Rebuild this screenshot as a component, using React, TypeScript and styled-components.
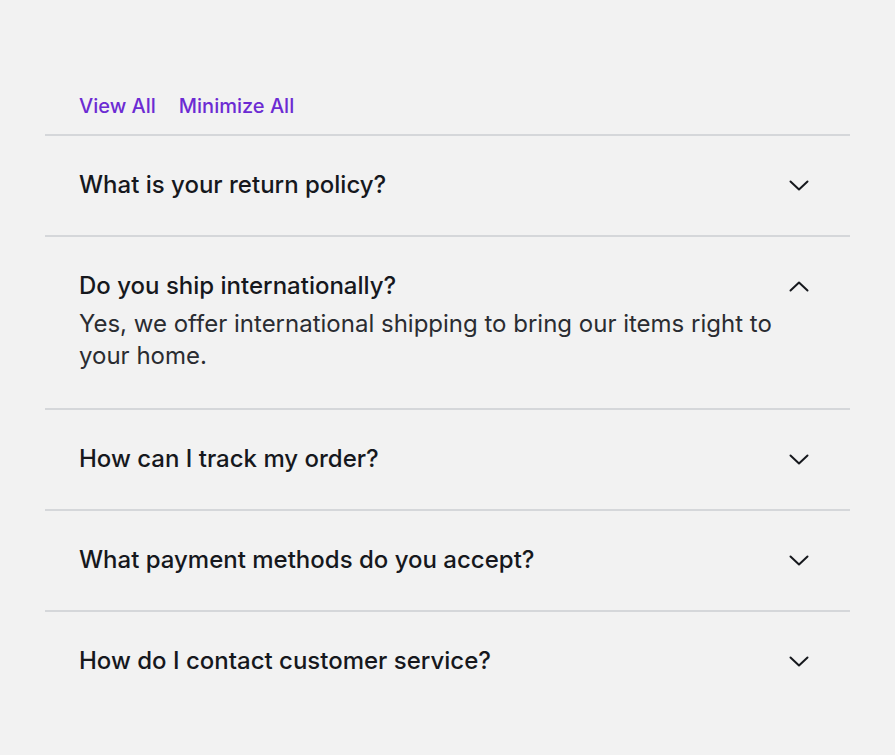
import React, { useState } from 'react';
import styled, { createGlobalStyle } from 'styled-components';

const GlobalStyle = createGlobalStyle`
  html, body {
    margin: 0;
    padding: 0;
    background: #f2f2f2;
    font-family: Inter, "Noto Sans", sans-serif;
    color: #16181d;
  }
`;

const Page = styled.div`
  padding: 94px 45px 40px 45px;
`;

const Toolbar = styled.div`
  display: flex;
  gap: 23px;
  padding: 0 34px 16px 34px;
`;

const LinkButton = styled.button`
  background: none;
  border: none;
  padding: 0;
  font-family: inherit;
  font-size: 20px;
  line-height: 24px;
  font-weight: 500;
  color: #6c2bd3;
  cursor: pointer;
`;

const Item = styled.div`
  border-top: 2px solid #d5d7da;
  padding: 35px 41px 36px 34px;
`;

const Question = styled.button`
  width: 100%;
  display: flex;
  align-items: center;
  justify-content: space-between;
  background: none;
  border: none;
  padding: 0;
  font-family: inherit;
  font-size: 24px;
  line-height: 28px;
  font-weight: 500;
  color: #16181d;
  text-align: left;
  cursor: pointer;
`;

const Chevron = styled.svg<{ $open: boolean }>`
  width: 20px;
  height: 11px;
  flex: none;
  transform: ${p => (p.$open ? 'rotate(180deg)' : 'none')};
`;

const Answer = styled.p`
  margin: 8px 0 0 0;
  font-size: 24px;
  line-height: 32px;
  font-weight: 400;
  color: #2a2c31;
`;

const faqs = [
  { q: 'What is your return policy?', a: 'You can return any item within 30 days of purchase for a full refund.' },
  { q: 'Do you ship internationally?', a: 'Yes, we offer international shipping to bring our items right to your home.' },
  { q: 'How can I track my order?', a: 'Once your order ships, we will email you a tracking number.' },
  { q: 'What payment methods do you accept?', a: 'We accept all major credit cards and PayPal.' },
  { q: 'How do I contact customer service?', a: 'You can reach us by email or phone any day of the week.' },
];

export default function App() {
  const [open, setOpen] = useState<boolean[]>([false, true, false, false, false]);

  const toggle = (i: number) => setOpen(prev => prev.map((v, j) => (j === i ? !v : v)));

  return (
    <Page>
      <GlobalStyle />
      <Toolbar>
        <LinkButton onClick={() => setOpen(faqs.map(() => true))}>View All</LinkButton>
        <LinkButton onClick={() => setOpen(faqs.map(() => false))}>Minimize All</LinkButton>
      </Toolbar>
      <div>
        {faqs.map((f, i) => (
          <Item key={f.q}>
            <Question onClick={() => toggle(i)}>
              {f.q}
              <Chevron $open={open[i]} viewBox="0 0 20 11" fill="none">
                <polyline points="1.5,1.5 10,9.5 18.5,1.5" stroke="#16181d" strokeWidth="2" strokeLinecap="round" strokeLinejoin="round" />
              </Chevron>
            </Question>
            {open[i] && <Answer>{f.a}</Answer>}
          </Item>
        ))}
      </div>
    </Page>
  );
}
